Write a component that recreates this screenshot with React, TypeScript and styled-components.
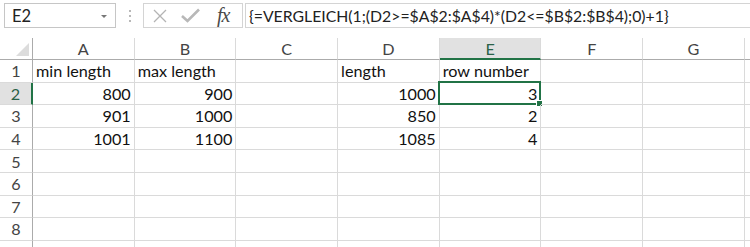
import { Fragment } from 'react'
import styled, { createGlobalStyle, css } from 'styled-components'

const GlobalStyle = createGlobalStyle`
  html, body {
    margin: 0;
    padding: 0;
    background: #ffffff;
    overflow: hidden;
  }
  body {
    font-family: Lato, 'Open Sans', sans-serif;
  }
`

const Page = styled.div`
  width: 750px;
  height: 247px;
  display: flex;
  flex-direction: column;
  background: #ffffff;
  overflow: hidden;
`

const FormulaBar = styled.div`
  display: flex;
  align-items: stretch;
  height: 27px;
  margin-top: 3px;
  padding-left: 4px;
`

const NameBox = styled.div`
  width: 112px;
  border: 1px solid #c6c6c6;
  display: flex;
  align-items: center;
  justify-content: space-between;
  padding: 0 8px 0 7px;
  box-sizing: border-box;
  font-size: 16.5px;
  color: #222;
`

const DropArrow = styled.span`
  width: 0;
  height: 0;
  border-left: 3px solid transparent;
  border-right: 3px solid transparent;
  border-top: 3px solid #777;
  margin-top: 1px;
`

const Grip = styled.div`
  width: 27px;
  display: flex;
  flex-direction: column;
  align-items: center;
  justify-content: center;
  gap: 3px;

  span {
    width: 2px;
    height: 2px;
    background: #b8b8b8;
  }
`

const FuncBox = styled.div`
  width: 100px;
  border: 1px solid #d4d4d4;
  display: flex;
  align-items: center;
  box-sizing: border-box;
  padding-left: 9px;
  gap: 14px;
`

const Fx = styled.span`
  font-family: 'Liberation Serif', serif;
  font-style: italic;
  font-size: 20px;
  color: #4a4a4a;
  margin-left: 3px;
  letter-spacing: -1px;
`

const FormulaInput = styled.div`
  flex: 1;
  margin-left: 2px;
  border: 1px solid #d4d4d4;
  border-right: none;
  display: flex;
  align-items: center;
  padding-left: 3px;
  font-size: 15.8px;
  color: #222;
  white-space: nowrap;
`

const Sheet = styled.div`
  margin-top: 10px;
  display: grid;
  grid-template-columns: 33px repeat(7, 101.7px) 1fr;
  grid-template-rows: 22px repeat(9, 22.6px);
`

const cellBase = css`
  box-sizing: border-box;
  border-right: 1px solid #dadada;
  border-bottom: 1px solid #dadada;
  display: flex;
  align-items: center;
  font-size: 16.2px;
  white-space: nowrap;
  overflow: visible;
`

const Corner = styled.div`
  ${cellBase};
  position: relative;
  border-right: 1px solid #ababab;
  border-bottom: 1px solid #ababab;

  &::after {
    content: '';
    position: absolute;
    right: 3px;
    bottom: 3px;
    width: 0;
    height: 0;
    border-left: 13px solid transparent;
    border-bottom: 13px solid #dcdcdc;
  }
`

const ColHead = styled.div<{ $active?: boolean }>`
  ${cellBase};
  justify-content: center;
  color: #444;
  border-bottom: 1px solid #ababab;
  ${p =>
    p.$active &&
    css`
      background: #e1e1e1;
      color: #2a6248;
      border-bottom: 2px solid #217346;
    `}
`

const RowHead = styled.div<{ $active?: boolean }>`
  ${cellBase};
  justify-content: center;
  color: #444;
  border-right: 1px solid #ababab;
  ${p =>
    p.$active &&
    css`
      background: #e1e1e1;
      color: #2a6248;
      border-right: 2px solid #217346;
    `}
`

const Cell = styled.div<{ $num?: boolean; $selected?: boolean }>`
  ${cellBase};
  position: relative;
  color: #111;
  padding: 0 3px;
  justify-content: ${p => (p.$num ? 'flex-end' : 'flex-start')};
  ${p =>
    p.$selected &&
    css`
      &::before {
        content: '';
        position: absolute;
        left: -2px;
        top: -2px;
        right: -1px;
        bottom: -1px;
        border: 2px solid #217346;
        pointer-events: none;
      }
      &::after {
        content: '';
        position: absolute;
        right: -3px;
        bottom: -3px;
        width: 5px;
        height: 5px;
        background: #217346;
        border: 1px solid #ffffff;
      }
    `}
`

const XIcon = () => (
  <svg width="14" height="14" viewBox="0 0 14 14">
    <path d="M1 1 L13 13 M13 1 L1 13" stroke="#b4b4b4" strokeWidth="1.3" fill="none" />
  </svg>
)

const CheckIcon = () => (
  <svg width="19" height="15" viewBox="0 0 19 15">
    <path d="M1 8 L6.5 13 L18 1.5" stroke="#b8b8b8" strokeWidth="2.6" fill="none" />
  </svg>
)

const columns = ['A', 'B', 'C', 'D', 'E', 'F', 'G', '']

type Val = { text: string; num?: boolean }

const rows: Record<number, Record<string, Val>> = {
  1: {
    A: { text: 'min length' },
    B: { text: 'max length' },
    D: { text: 'length' },
    E: { text: 'row number' }
  },
  2: {
    A: { text: '800', num: true },
    B: { text: '900', num: true },
    D: { text: '1000', num: true },
    E: { text: '3', num: true }
  },
  3: {
    A: { text: '901', num: true },
    B: { text: '1000', num: true },
    D: { text: '850', num: true },
    E: { text: '2', num: true }
  },
  4: {
    A: { text: '1001', num: true },
    B: { text: '1100', num: true },
    D: { text: '1085', num: true },
    E: { text: '4', num: true }
  }
}

export default function App() {
  return (
    <Page>
      <GlobalStyle />
      <FormulaBar>
        <NameBox>
          <span>E2</span>
          <DropArrow />
        </NameBox>
        <Grip>
          <span />
          <span />
          <span />
        </Grip>
        <FuncBox>
          <XIcon />
          <CheckIcon />
          <Fx>fx</Fx>
        </FuncBox>
        <FormulaInput>{'{=VERGLEICH(1;(D2>=$A$2:$A$4)*(D2<=$B$2:$B$4);0)+1}'}</FormulaInput>
      </FormulaBar>
      <Sheet>
        <Corner />
        {columns.map((c, i) => (
          <ColHead key={i} $active={c === 'E'}>
            {c}
          </ColHead>
        ))}
        {Array.from({ length: 9 }, (_, r) => r + 1).map(r => (
          <Fragment key={r}>
            <RowHead $active={r === 2}>{r < 9 ? r : ''}</RowHead>
            {columns.map((c, i) => {
              const v = rows[r]?.[c]
              return (
                <Cell key={i} $num={v?.num} $selected={r === 2 && c === 'E'}>
                  {v?.text}
                </Cell>
              )
            })}
          </Fragment>
        ))}
      </Sheet>
    </Page>
  )
}
